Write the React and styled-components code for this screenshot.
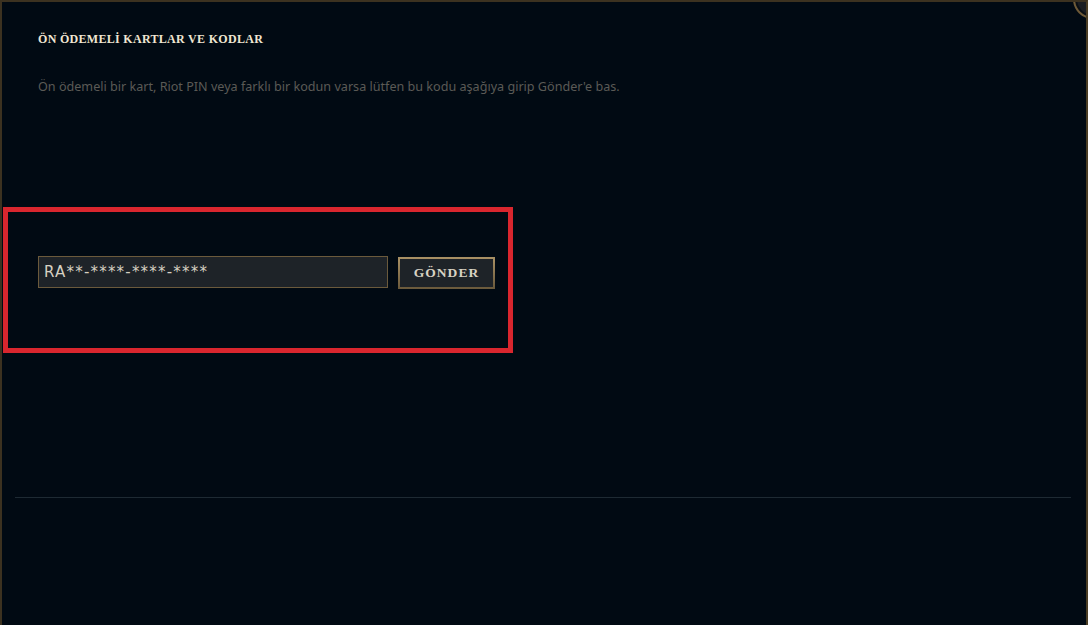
import styled, { createGlobalStyle } from "styled-components";

const GlobalStyle = createGlobalStyle`
  html, body {
    margin: 0;
    padding: 0;
    background: #010a13;
  }
  #root {
    height: 625px;
  }
`;

const App = () => {
  return (
    <>
      <GlobalStyle />
      <Frame>
        <CloseRing />
        <Content>
          <Title>ÖN ÖDEMELİ KARTLAR VE KODLAR</Title>
          <Hint>
            Ön ödemeli bir kart, Riot PIN veya farklı bir kodun varsa lütfen bu
            kodu aşağıya girip Gönder'e bas.
          </Hint>
        </Content>
        <Highlight>
          <CodeRow>
            <CodeInput defaultValue="RA**-****-****-****" />
            <SubmitButton>GÖNDER</SubmitButton>
          </CodeRow>
        </Highlight>
        <Divider />
      </Frame>
    </>
  );
};

const Frame = styled.div`
  position: relative;
  box-sizing: border-box;
  width: 1088px;
  height: 625px;
  overflow: hidden;
  background: #010a13;
  border-top: 2px solid #3c3220;
  border-left: 2px solid #3c3220;
  border-right: 2px solid #4a3d24;
  display: flex;
  flex-direction: column;
`;

const CloseRing = styled.div`
  position: absolute;
  left: 1071px;
  top: -23px;
  width: 36px;
  height: 36px;
  border-radius: 50%;
  border: 2px solid #6e5a38;
  background: #1a1d22;
  box-shadow: inset 0 0 0 2px #0a0f14;
`;

const Content = styled.div`
  padding: 30px 0 0 36px;
`;

const Title = styled.h2`
  margin: 0;
  font-family: "Liberation Serif", "DejaVu Serif", serif;
  font-weight: 700;
  font-size: 12px;
  letter-spacing: 0.025em;
  color: #f0e6d2;
`;

const Hint = styled.p`
  margin: 31px 0 0;
  font-family: "Noto Sans", "Open Sans", sans-serif;
  font-size: 12.6px;
  color: #5b5a56;
`;

const Highlight = styled.div`
  box-sizing: border-box;
  width: 510px;
  height: 146px;
  margin: 112px 0 0 1px;
  border: 5px solid #d9262e;
  display: flex;
  align-items: center;
  padding-left: 30px;
  padding-bottom: 16px;
`;

const CodeRow = styled.div`
  display: flex;
  align-items: center;
  gap: 10px;
`;

const CodeInput = styled.input`
  box-sizing: border-box;
  width: 350px;
  height: 32px;
  padding: 0 5px;
  background: #1e2328;
  border: 1px solid #6b5a3c;
  outline: none;
  font-family: "DejaVu Sans", "Liberation Sans", sans-serif;
  font-size: 15px;
  letter-spacing: 1.2px;
  color: #d6d0c2;
`;

const SubmitButton = styled.button`
  box-sizing: border-box;
  width: 97px;
  height: 32px;
  margin-top: 2px;
  background: #1e2328;
  border: 2px solid #8a7652;
  border-image: linear-gradient(to bottom, #a89064, #6b5a3c) 1;
  font-family: "Liberation Serif", "DejaVu Serif", serif;
  font-weight: 700;
  font-size: 13.5px;
  letter-spacing: 0.08em;
  color: #d8d2c3;
  cursor: pointer;
`;

const Divider = styled.div`
  height: 1px;
  margin: 144px 15px 0 13px;
  background: #1e2a33;
`;

export default App;
